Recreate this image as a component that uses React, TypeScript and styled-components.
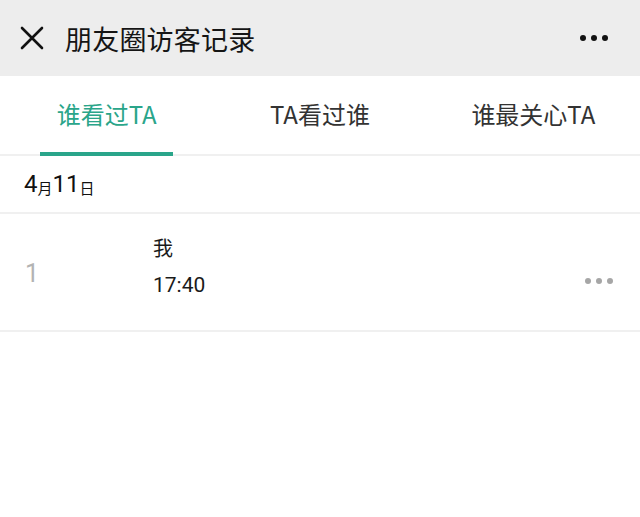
import React from "react";
import styled, { createGlobalStyle } from "styled-components";

const GlobalStyle = createGlobalStyle`
  html, body {
    margin: 0;
    padding: 0;
    background: #ffffff;
  }
  body {
    font-family: "Noto Sans CJK SC", "Noto Sans", sans-serif;
    color: #1a1a1a;
  }
`;

const TABS = ["谁看过TA", "TA看过谁", "谁最关心TA"];

const Page = styled.div`
  width: 640px;
  min-height: 517px;
  background: #fff;
`;

const TopBar = styled.header`
  height: 76px;
  background: #ededed;
  display: flex;
  align-items: center;
  padding: 0 32px 0 20px;
  box-sizing: border-box;
`;

const CloseButton = styled.div`
  width: 24px;
  height: 24px;
  display: flex;
  margin-right: 21px;
`;

const Title = styled.h1`
  margin: 0;
  flex: 1;
  font-size: 27px;
  font-weight: 400;
  color: #151515;
  letter-spacing: 0.2px;
`;

const MoreDots = styled.div<{ $color: string; $size: number }>`
  display: flex;
  gap: ${(p) => p.$size - 1}px;
  span {
    width: ${(p) => p.$size}px;
    height: ${(p) => p.$size}px;
    border-radius: 50%;
    background: ${(p) => p.$color};
  }
`;

const RowMore = styled(MoreDots)`
  margin-top: 18px;
`;

const TabBar = styled.nav`
  height: 80px;
  display: flex;
  border-bottom: 2px solid #f0f0f0;
  box-sizing: border-box;
`;

const Tab = styled.div<{ $active?: boolean }>`
  flex: 1;
  position: relative;
  display: flex;
  align-items: center;
  justify-content: center;
  padding-bottom: 3px;
  font-size: 24px;
  color: ${(p) => (p.$active ? "#2aa58a" : "#333")};

  &::after {
    content: "";
    display: ${(p) => (p.$active ? "block" : "none")};
    position: absolute;
    left: 40px;
    right: 40px;
    bottom: -2px;
    height: 4px;
    background: #2aa58a;
  }
`;

const DateRow = styled.div`
  height: 58px;
  display: flex;
  align-items: center;
  padding: 0 24px;
  border-bottom: 2px solid #f0f0f0;
  box-sizing: border-box;
  font-family: Roboto, "Noto Sans CJK SC", sans-serif;
  font-size: 24px;
  color: #111;

  small {
    font-family: "Noto Sans CJK SC", sans-serif;
    font-size: 15px;
    margin-top: 6px;
  }
`;

const VisitorRow = styled.div`
  height: 118px;
  display: flex;
  align-items: center;
  padding: 0 27px 0 25px;
  border-bottom: 2px solid #f0f0f0;
  box-sizing: border-box;
`;

const Rank = styled.div`
  width: 128px;
  font-family: Roboto, sans-serif;
  font-size: 25px;
  color: #b3b3b3;
  padding-top: 2px;
`;

const Info = styled.div`
  flex: 1;
  display: flex;
  flex-direction: column;
  gap: 11px;
  font-size: 20px;
  color: #1a1a1a;
  padding-bottom: 14px;
`;

const Time = styled.span`
  font-family: Roboto, sans-serif;
  font-size: 21px;
`;

function CloseIcon() {
  return (
    <svg width="24" height="24" viewBox="0 0 24 24">
      <path d="M2 2 L22 22 M22 2 L2 22" stroke="#111" strokeWidth="2.6" strokeLinecap="round" />
    </svg>
  );
}

export default function App() {
  return (
    <Page>
      <GlobalStyle />
      <TopBar>
        <CloseButton>
          <CloseIcon />
        </CloseButton>
        <Title>朋友圈访客记录</Title>
        <MoreDots $color="#111" $size={6}>
          <span />
          <span />
          <span />
        </MoreDots>
      </TopBar>
      <TabBar>
        {TABS.map((t, i) => (
          <Tab key={t} $active={i === 0}>
            {t}
          </Tab>
        ))}
      </TabBar>
      <DateRow>
        4<small>月</small>11<small>日</small>
      </DateRow>
      <VisitorRow>
        <Rank>1</Rank>
        <Info>
          <span>我</span>
          <Time>17:40</Time>
        </Info>
        <RowMore $color="#a6a6a6" $size={6}>
          <span />
          <span />
          <span />
        </RowMore>
      </VisitorRow>
    </Page>
  );
}
